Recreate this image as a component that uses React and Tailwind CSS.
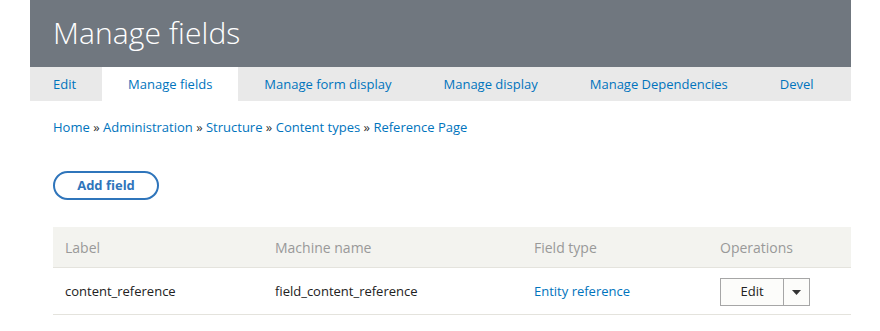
import React from "react";

export default function App() {
  const tabs = ["Edit", "Manage fields", "Manage form display", "Manage display", "Manage Dependencies", "Devel"];
  return (
    <div className="w-[880px] h-[331px] bg-white font-['Open_Sans',sans-serif] overflow-hidden">
      <div className="mx-[30px] w-[821px]">
        <div className="h-[67px] bg-[#70777f] flex items-center pl-[23px]">
          <h1 className="text-[30px] font-light text-white leading-none tracking-[0.1px] pb-[2px]">Manage fields</h1>
        </div>
        <div className="h-[34px] bg-[#e9e9e9] flex">
          {tabs.map((t, i) => (
            <div
              key={t}
              className={
                "h-full flex items-center pt-[1px] text-[13px] text-[#0074bd] " +
                (i === 1 ? "bg-white px-[26px]" : i === 0 ? "pl-[23px] pr-[26px]" : "px-[26px]")
              }
            >
              {t}
            </div>
          ))}
        </div>
        <div className="px-[23px]">
          <div className="pt-[17px] text-[13px] text-[#0074bd] leading-[18px] whitespace-pre">
            Home <span className="text-[#333]">»</span> Administration <span className="text-[#333]">»</span> Structure <span className="text-[#333]">»</span> Content types <span className="text-[#333]">»</span> Reference Page
          </div>
          <div className="mt-[35px]">
            <button className="w-[106px] h-[29px] rounded-full border-2 border-[#2f75bb] text-[#2f75bb] text-[13px] font-bold flex items-center justify-center bg-white">
              Add field
            </button>
          </div>
          <div className="mt-[27px] w-[798px]">
            <div className="grid grid-cols-[210px_259px_186px_143px] h-[41px] bg-[#f3f3ef] border-b border-[#e4e3dd] items-center text-[14px] text-[#999]">
              <div className="pl-[12px]">Label</div>
              <div className="pl-[12px]">Machine name</div>
              <div className="pl-[12px]">Field type</div>
              <div className="pl-[12px]">Operations</div>
            </div>
            <div className="grid grid-cols-[210px_259px_186px_143px] h-[47px] pt-[2px] border-b border-[#e4e3dd] items-center text-[13px] text-[#222]">
              <div className="pl-[12px]">content_reference</div>
              <div className="pl-[12px]">field_content_reference</div>
              <div className="pl-[12px] text-[#0074bd]">Entity reference</div>
              <div className="pl-[12px]">
                <div className="flex w-[90px] h-[28px] border border-[#a6a6a6] bg-[#fcfcfa]">
                  <div className="w-[63px] border-r border-[#a6a6a6] flex items-center justify-center text-[13px] text-[#222]">Edit</div>
                  <div className="flex-1 flex items-center justify-center">
                    <svg width="9" height="5" viewBox="0 0 9 5"><path d="M0 0h9L4.5 5z" fill="#333" /></svg>
                  </div>
                </div>
              </div>
            </div>
          </div>
        </div>
      </div>
    </div>
  );
}
